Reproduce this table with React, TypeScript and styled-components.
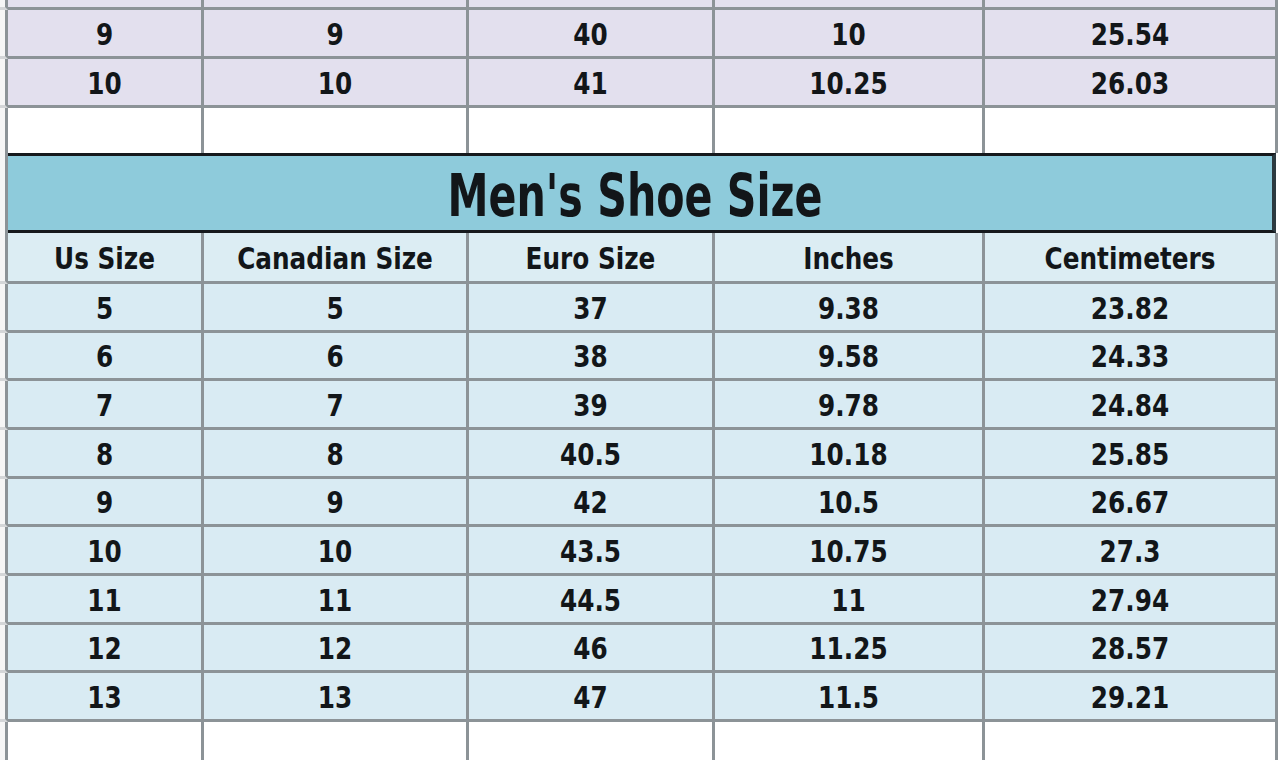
import styled, { createGlobalStyle } from 'styled-components'

type Tone = 'lavender' | 'blank' | 'header' | 'data'

const tones: Record<Tone, string> = {
  lavender: '#e3e0ee',
  blank: '#ffffff',
  header: '#dcedf3',
  data: '#d9ebf3',
}

const topRows = [
  ['9', '9', '40', '10', '25.54'],
  ['10', '10', '41', '10.25', '26.03'],
]

const headers = ['Us Size', 'Canadian Size', 'Euro Size', 'Inches', 'Centimeters']

const mensSizes = [
  ['5', '5', '37', '9.38', '23.82'],
  ['6', '6', '38', '9.58', '24.33'],
  ['7', '7', '39', '9.78', '24.84'],
  ['8', '8', '40.5', '10.18', '25.85'],
  ['9', '9', '42', '10.5', '26.67'],
  ['10', '10', '43.5', '10.75', '27.3'],
  ['11', '11', '44.5', '11', '27.94'],
  ['12', '12', '46', '11.25', '28.57'],
  ['13', '13', '47', '11.5', '29.21'],
]

const GlobalStyle = createGlobalStyle`
  html, body {
    margin: 0;
    padding: 0;
    background: #ffffff;
    overflow: hidden;
  }
`

export default function App() {
  return (
    <>
      <GlobalStyle />
      <Sheet>
        <Row $height={10}>
          <Gutter />
          {topRows[0].map((_, i) => (
            <Cell key={i} $tone="lavender" />
          ))}
        </Row>
        {topRows.map((row, r) => (
          <Row key={r} $height={49}>
            <Gutter />
            {row.map((value, i) => (
              <Cell key={i} $tone="lavender">
                <Value>{value}</Value>
              </Cell>
            ))}
          </Row>
        ))}
        <Row $height={45}>
          <Gutter $plain />
          {headers.map((_, i) => (
            <Cell key={i} $tone="blank" $noBottom />
          ))}
        </Row>
        <Row $height={80}>
          <Gutter $plain />
          <TitleBand>
            <TitleText>Men's Shoe Size</TitleText>
          </TitleBand>
        </Row>
        <Row $height={51}>
          <Gutter />
          {headers.map((label) => (
            <Cell key={label} $tone="header">
              <Value>{label}</Value>
            </Cell>
          ))}
        </Row>
        {mensSizes.map((row, r) => (
          <Row key={r} $height={48.67}>
            <Gutter />
            {row.map((value, i) => (
              <Cell key={i} $tone="data">
                <Value>{value}</Value>
              </Cell>
            ))}
          </Row>
        ))}
        <Row $height={60}>
          <Gutter />
          {headers.map((_, i) => (
            <Cell key={i} $tone="blank" />
          ))}
        </Row>
      </Sheet>
    </>
  )
}

const Sheet = styled.div`
  display: flex;
  flex-direction: column;
  width: 1278px;
  height: 760px;
  overflow: hidden;
  font-family: 'DejaVu Sans Condensed', 'DejaVu Sans', sans-serif;
  font-weight: 700;
  color: #121619;
`

const Row = styled.div<{ $height: number }>`
  display: grid;
  grid-template-columns: 8px 196px 265px 246px 270px 1fr;
  flex: 0 0 ${(p) => p.$height}px;
  height: ${(p) => p.$height}px;
`

const Gutter = styled.div<{ $plain?: boolean }>`
  background: #f6f6f6;
  border-right: 3px solid #8c9397;
  border-bottom: ${(p) => (p.$plain ? 'none' : '3px solid #d4d6d8')};
`

const Cell = styled.div<{ $tone: Tone; $noBottom?: boolean }>`
  display: flex;
  align-items: center;
  justify-content: center;
  padding-top: 3px;
  background: ${(p) => tones[p.$tone]};
  border-right: 3px solid #8c9397;
  border-bottom: ${(p) => (p.$noBottom ? 'none' : '3px solid #8c9397')};
  font-size: 27.5px;
  line-height: 1;
  white-space: nowrap;
`

const Value = styled.span`
  display: inline-block;
  transform: scaleY(1.1);
`

const TitleBand = styled.div`
  grid-column: 2 / -1;
  display: flex;
  align-items: center;
  justify-content: center;
  background: #8ecbdb;
  border-top: 3px solid #15191c;
  border-bottom: 3px solid #15191c;
  border-right: 4px solid #2c3a40;
  margin-right: 2px;
  padding: 8px 10px 0 0;
  font-size: 45.8px;
  line-height: 1;
`

const TitleText = styled.span`
  display: inline-block;
  transform: scaleY(1.28);
`
